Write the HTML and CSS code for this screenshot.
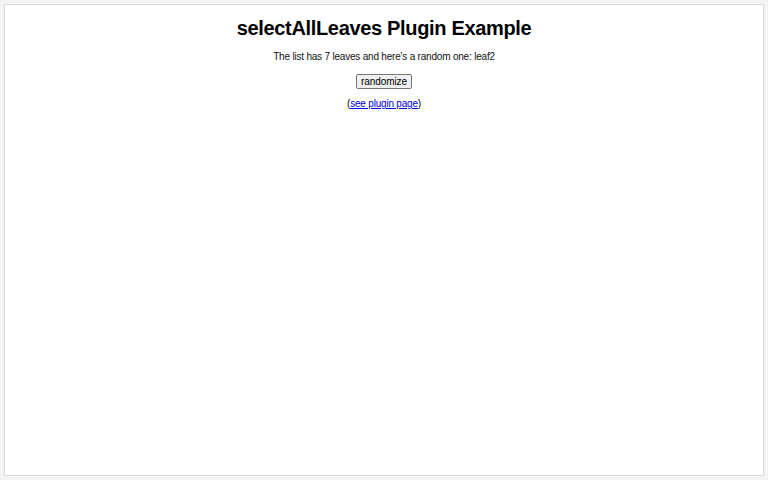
FILE: index.html
```html
<!DOCTYPE html>
<html>
<head>
<meta charset="utf-8">
<title>selectAllLeaves Plugin Example</title>
<link rel="stylesheet" href="styles.css">
</head>
<body>
<div class="frame">
  <h1 class="title">selectAllLeaves Plugin Example</h1>
  <p class="info">The list has 7 leaves and here's a random one: <span class="leaf">leaf2</span></p>
  <p class="actions"><button class="btn" type="button">randomize</button></p>
  <p class="more">(<a href="#" class="link">see plugin page</a>)</p>
</div>
</body>
</html>
```
FILE: styles.css
```css
html, body {
  margin: 0;
  height: 100%;
}

body {
  background: #f3f3f3;
  padding: 4px;
  box-sizing: border-box;
  font-family: "Liberation Sans", Arial, sans-serif;
}

.frame {
  background: #fff;
  border: 1px solid #d9d9d9;
  height: 100%;
  box-sizing: border-box;
  text-align: center;
  padding-top: 11px;
}

.title {
  font-size: 20px;
  font-weight: bold;
  letter-spacing: -0.33px;
  margin: 0;
  line-height: 24px;
  color: #000;
}

.info {
  font-size: 10px;
  letter-spacing: -0.2px;
  margin: 11px 0 0;
  line-height: 12px;
  color: #111;
}

.actions {
  margin: 10px 0 0;
  line-height: 14px;
}

.btn {
  font-family: "Liberation Sans", Arial, sans-serif;
  font-size: 10px;
  letter-spacing: -0.1px;
  padding: 1px 4px;
  border: 1px solid #767676;
  border-radius: 2px;
  background: #efefef;
  color: #000;
}

.more {
  font-size: 10px;
  letter-spacing: -0.2px;
  margin: 9px 0 0;
  line-height: 12px;
}

.link {
  color: #0000ee;
  text-decoration: underline;
}
```
